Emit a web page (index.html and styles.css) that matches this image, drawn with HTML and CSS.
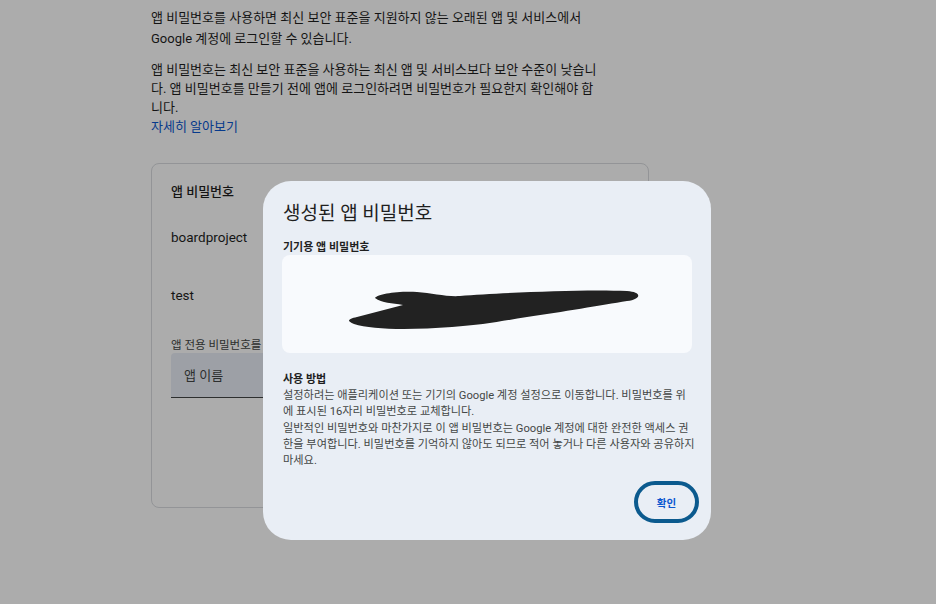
FILE: index.html
```html
<!DOCTYPE html>
<html lang="ko">
<head>
    <meta charset="UTF-8">
    <meta name="viewport" content="width=device-width, initial-scale=1.0">
    <title>앱 비밀번호</title>
    <link rel="stylesheet" href="styles.css">
</head>
<body>
    <div class="page">
        <p class="intro">앱 비밀번호를 사용하면 최신 보안 표준을 지원하지 않는 오래된 앱 및 서비스에서 Google 계정에 로그인할 수 있습니다.</p>
        <p class="intro second">앱 비밀번호는 최신 보안 표준을 사용하는 최신 앱 및 서비스보다 보안 수준이 낮습니다. 앱 비밀번호를 만들기 전에 앱에 로그인하려면 비밀번호가 필요한지 확인해야 합니다.
            <a href="#" class="learn">자세히 알아보기</a>
        </p>

        <section class="card">
            <h2 class="card-title">앱 비밀번호</h2>
            <ul class="app-list">
                <li>boardproject</li>
                <li>test</li>
            </ul>
            <label class="field-label" for="appName">앱 전용 비밀번호를 만들려면 아래에 앱 이름을 입력하세요.</label>
            <input class="field" id="appName" type="text" placeholder="앱 이름">
        </section>
    </div>

    <!-- dialog over the page -->
    <div class="scrim">
        <div class="dialog">
            <h1 class="dialog-title">생성된 앱 비밀번호</h1>
            <div class="pw-label">기기용 앱 비밀번호</div>
            <div class="pw-box">
                <svg width="410" height="98" viewBox="0 0 410 98">
                    <path fill="#222" d="M93 43 C96 39 115 36 135 37 C150 38 165 42 178 41 C220 38 300 34 345 36 C360 37 360 44 345 46 C320 50 280 57 245 62 C220 66 200 70 170 72 C130 75 90 75 72 69 C64 66 66 64 75 62 L121 50 C110 48 100 48 93 43 Z"/>
                </svg>
            </div>
            <div class="howto">
                <strong>사용 방법</strong>
                <p>설정하려는 애플리케이션 또는 기기의 Google 계정 설정으로 이동합니다. 비밀번호를 위에 표시된 16자리 비밀번호로 교체합니다.</p>
                <p>일반적인 비밀번호와 마찬가지로 이 앱 비밀번호는 Google 계정에 대한 완전한 액세스 권한을 부여합니다. 비밀번호를 기억하지 않아도 되므로 적어 놓거나 다른 사용자와 공유하지 마세요.</p>
            </div>
            <div class="actions">
                <button class="ok" type="button">확인</button>
            </div>
        </div>
    </div>
</body>
</html>
```

FILE: styles.css
```css
body {
    margin: 0;
    background: #fff;
    color: #1f1f1f;
    font-family: Roboto, "Noto Sans CJK KR", sans-serif;
}

.page {
    width: 498px;
    padding: 7px 0 0 151px;
}

.intro {
    width: 450px;
    margin: 0;
    font-size: 13px;
    line-height: 21px;
}

.intro.second {
    margin-top: 11px;
    line-height: 19px;
}

.learn {
    display: block;
    color: #0b57d0;
    text-decoration: none;
}

.card {
    box-sizing: border-box;
    margin-top: 27px;
    height: 345px;
    border: 1px solid #dadce0;
    border-radius: 8px;
    padding: 18px 19px 0;
}

.card-title {
    margin: 0;
    font-size: 13px;
    font-weight: 500;
    line-height: 20px;
}

.app-list {
    list-style: none;
    margin: 6px 0 0;
    padding: 0;
}

.app-list li {
    height: 58px;
    display: flex;
    align-items: center;
    font-size: 13.5px;
}

.field-label {
    display: block;
    margin-top: 14px;
    font-size: 11.5px;
    line-height: 14px;
    color: #444746;
    white-space: nowrap;
}

.field {
    display: block;
    box-sizing: border-box;
    width: 458px;
    height: 45px;
    margin-top: 1px;
    padding: 0 13px;
    border: none;
    border-bottom: 1px solid #444746;
    border-radius: 4px 4px 0 0;
    background: #e9eef6;
    font-family: inherit;
    font-size: 13px;
    color: #1f1f1f;
}

.field::placeholder {
    color: #444746;
}

/* overlay */
.scrim {
    position: fixed;
    inset: 0;
    background: rgba(0, 0, 0, 0.325);
}

.dialog {
    box-sizing: border-box;
    width: 448px;
    height: 359px;
    margin: 181px 0 0 263px;
    padding: 19px 19px 0 20px;
    background: #e9eef5;
    border-radius: 28px;
}

.dialog-title {
    margin: 0;
    font-size: 19px;
    font-weight: 400;
    line-height: 28px;
    color: #1f1f1f;
}

.pw-label {
    margin-top: 13px;
    font-size: 11px;
    font-weight: 700;
    line-height: 14px;
    color: #1f1f1f;
}

.pw-box {
    margin-left: -1px;
    width: 410px;
    height: 98px;
    background: #f8fafd;
    border-radius: 8px;
}

.pw-box svg {
    display: block;
}

.howto {
    width: 412px;
    margin-top: 19px;
    font-size: 11.2px;
    line-height: 16.2px;
    color: #444746;
}

.howto strong {
    display: block;
    font-size: 11px;
    color: #1f1f1f;
}

.howto p {
    margin: 0;
}

.actions {
    display: flex;
    justify-content: flex-end;
    margin-top: 16px;
}

.ok {
    width: 57px;
    height: 34px;
    margin-right: -3px;
    border: none;
    border-radius: 17px;
    background: transparent;
    outline: 4px solid #0b5a8e;
    font-family: inherit;
    font-size: 10.5px;
    font-weight: 700;
    color: #0b57d0;
}
```
